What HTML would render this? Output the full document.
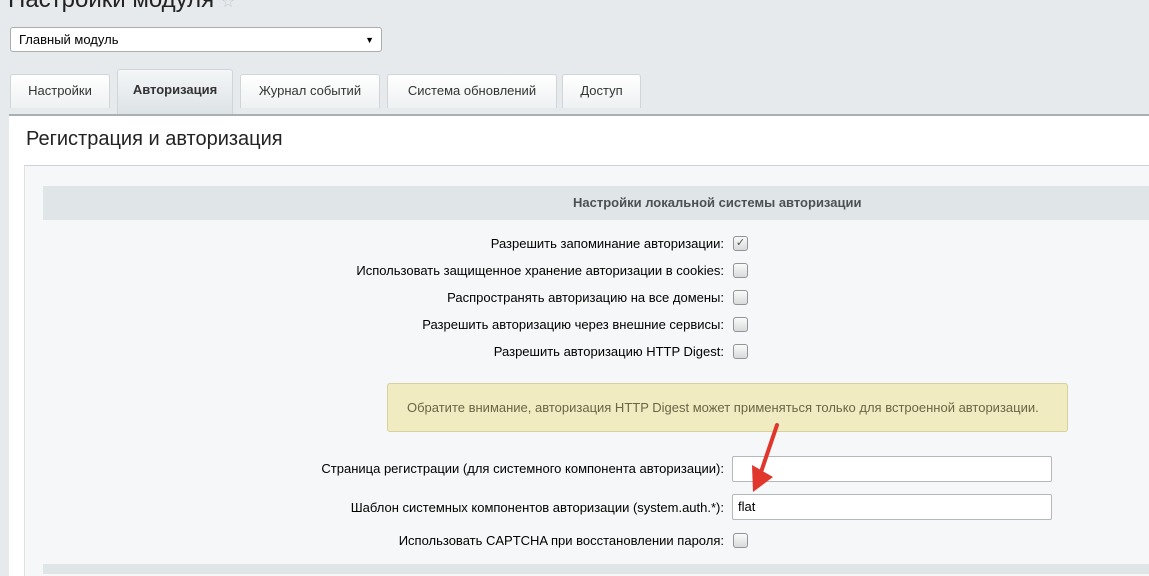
<!DOCTYPE html>
<html><head><meta charset="utf-8"><style>
body{margin:0;width:1149px;height:569px;overflow:hidden;background:#e7eaec;font-family:"Liberation Sans",sans-serif;position:relative}
.a{position:absolute}
.title{left:8px;top:-14px;font-size:24px;color:#222}
.sel{left:10px;top:27px;width:370px;height:24px;background:#fff;border:1px solid #a9aeb1;border-radius:3px;font-size:13px;line-height:24px;box-sizing:border-box;padding-left:8px;width:372px;height:25px}
.tab{top:74px;height:34px;border:1px solid #d0d5d8;border-bottom:none;border-radius:3px 3px 0 0;background:linear-gradient(#fff,#eef1f2);font-size:13px;color:#333;box-sizing:border-box;text-align:center;line-height:32px}
.panel{left:9px;top:114px;width:1150px;height:460px;background:#fff;border-top:2px solid #a9b0b4}
.h2{left:26px;top:128px;font-size:20px;color:#222}
.inner{left:24px;top:165px;width:1130px;height:410px;background:#f5f7f8;border-top:1px solid #ccd3d6;border-left:1px solid #dde3e5}
.hdr{left:43px;top:186px;width:1110px;height:34px;background:#e0e6e8;font-weight:bold;font-size:13px;color:#4b5153;line-height:33px}
.lbl{right:425px;font-size:13px;color:#000;text-align:right;white-space:nowrap}
.cb{left:733px;width:13px;height:13px;border:1px solid #8f9599;border-radius:3px;background:linear-gradient(#fafafa,#d8dadb)}
.inp{left:732px;width:320px;height:26px;background:#fff;border:1px solid #b2b8bb;border-radius:2px;box-sizing:border-box;font-size:13px;padding-left:5px;line-height:24px}
</style></head><body>
<div class="a title">Настройки модуля <span style="color:#c5c9cb;font-size:16px">☆</span></div>
<div class="a sel">Главный модуль<span style="position:absolute;right:7px;font-size:9px">▼</span></div>
<div class="a tab" style="left:10px;width:100px">Настройки</div>
<div class="a tab" style="left:117px;width:116px;top:69px;height:45px;background:linear-gradient(#f4f6f7,#dde3e6);font-weight:bold;line-height:40px">Авторизация</div>
<div class="a tab" style="left:240px;width:140px">Журнал событий</div>
<div class="a tab" style="left:387px;width:170px">Система обновлений</div>
<div class="a tab" style="left:562px;width:79px">Доступ</div>
<div class="a panel"></div>
<div class="a h2">Регистрация и авторизация</div>
<div class="a inner"></div>
<div class="a hdr"><span style="position:absolute;left:530px">Настройки локальной системы авторизации</span></div>
<div class="a lbl" style="top:236px">Разрешить запоминание авторизации:</div>
<div class="a cb" style="top:236px;font-size:11px;line-height:13px;text-align:center;color:#555">✓</div>
<div class="a lbl" style="top:263px">Использовать защищенное хранение авторизации в cookies:</div>
<div class="a cb" style="top:263px"></div>
<div class="a lbl" style="top:290px">Распространять авторизацию на все домены:</div>
<div class="a cb" style="top:290px"></div>
<div class="a lbl" style="top:317px">Разрешить авторизацию через внешние сервисы:</div>
<div class="a cb" style="top:317px"></div>
<div class="a lbl" style="top:344px">Разрешить авторизацию HTTP Digest:</div>
<div class="a cb" style="top:344px"></div>
<div class="a" style="left:387px;top:383px;width:681px;height:49px;background:#f1ebc2;border:1px solid #d8d09d;border-radius:3px;box-sizing:border-box;font-size:13px;color:#6b6545;line-height:47px;padding-left:19px">Обратите внимание, авторизация HTTP Digest может применяться только для встроенной авторизации.</div>
<div class="a lbl" style="top:461px">Страница регистрации (для системного компонента авторизации):</div>
<div class="a inp" style="top:456px"></div>
<div class="a lbl" style="top:500px">Шаблон системных компонентов авторизации (system.auth.*):</div>
<div class="a inp" style="top:494px">flat</div>
<div class="a lbl" style="top:533px">Использовать CAPTCHA при восстановлении пароля:</div>
<div class="a cb" style="top:533px"></div>
<div class="a" style="left:43px;top:564px;width:1110px;height:10px;background:#e0e6e8"></div>
<svg class="a" style="left:740px;top:415px" width="50" height="85"><line x1="37" y1="10" x2="20" y2="60" stroke="#e0362c" stroke-width="4" stroke-linecap="round"/><polygon points="12,50 33,62 13,77" fill="#e0362c"/></svg>
</body></html>
